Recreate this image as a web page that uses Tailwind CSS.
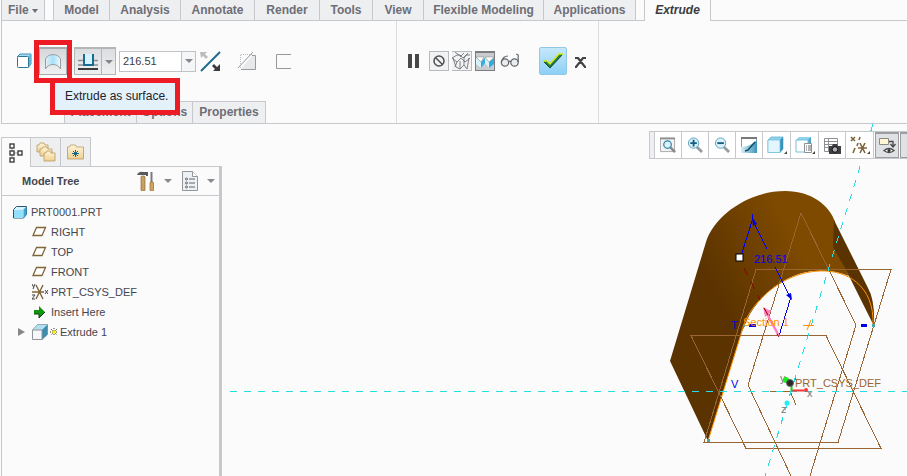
<!DOCTYPE html>
<html lang="en">
<head>
    <meta charset="UTF-8">
    <meta name="viewport" content="width=device-width, initial-scale=1.0">
    <title>PRT0001 - Extrude</title>
    <script src="https://cdn.jsdelivr.net/npm/@tailwindcss/browser@4"></script>
</head>
<body class="bg-[#fbfbfb] font-['Liberation_Sans',Arial,sans-serif] text-xs text-[#45454d]">
    <div class="flex flex-col min-h-screen overflow-hidden">

        <!-- Ribbon tabs -->
        <nav class="flex h-[21px] pl-px font-bold text-[#6e6e76] leading-5 text-center whitespace-nowrap">
            <a href="#" class="w-11 shrink-0 bg-[#edeff1] border-x border-b border-[#c6c8cc]">File <span class="inline-block align-middle border-x-3 border-t-4 border-x-transparent border-t-[#6e6e76]"></span></a>
            <span class="w-2 shrink-0 border-b border-[#c6c8cc]"></span>
            <a href="#" class="w-[57px] shrink-0 bg-[#edeff1] border-x border-b border-[#c6c8cc]">Model</a>
            <a href="#" class="w-[71px] shrink-0 bg-[#edeff1] border-r border-b border-[#c6c8cc]">Analysis</a>
            <a href="#" class="w-[74px] shrink-0 bg-[#edeff1] border-r border-b border-[#c6c8cc]">Annotate</a>
            <a href="#" class="w-[65px] shrink-0 bg-[#edeff1] border-r border-b border-[#c6c8cc]">Render</a>
            <a href="#" class="w-[53px] shrink-0 bg-[#edeff1] border-r border-b border-[#c6c8cc]">Tools</a>
            <a href="#" class="w-[51px] shrink-0 bg-[#edeff1] border-r border-b border-[#c6c8cc]">View</a>
            <a href="#" class="w-[120px] shrink-0 bg-[#edeff1] border-r border-b border-[#c6c8cc]">Flexible Modeling</a>
            <a href="#" class="w-[92px] shrink-0 bg-[#edeff1] border-r border-b border-[#c6c8cc]">Applications</a>
            <span class="w-2 shrink-0 border-b border-[#c6c8cc]"></span>
            <a href="#" class="w-[67px] shrink-0 border-x border-[#c6c8cc] italic text-[#3c3c42]">Extrude</a>
            <span class="grow border-b border-[#c6c8cc]"></span>
        </nav>

        <!-- Dashboard -->
        <section class="flex h-[103px] ml-px border-l border-b border-[#c6c8cc]">
            <div class="flex flex-col w-[395px] shrink-0 border-r border-[#dcdde0]">
                <div class="flex items-center h-20 pl-[14px]">
                    <button aria-label="Extrude as solid" class="mr-[7px]">
                        <svg class="size-4" viewBox="0 0 16 16"><path d="M1 4L4 1h11v10l-3 4" fill="#a5dcf2" stroke="#3a93b8"/><path d="M12 4l3-3v10l-3 4z" fill="#62b4d6"/><rect x="1.500" y="3.500" width="11" height="11" rx="1" fill="#fff" stroke="#2b7595"/></svg>
                    </button>
                    <div class="relative mr-[7px]">
                        <button aria-label="Extrude as surface" class="flex items-center justify-center w-7 h-7 border border-t-2 border-[#a8a8aa] bg-linear-to-b from-[#d6d7da] to-[#f0f1f2]">
                            <svg class="w-5 h-5" viewBox="0 0 20 20"><defs><linearGradient id="surf"><stop offset="0" stop-color="#e4eef3"/><stop offset=".5" stop-color="#a4e2fa"/><stop offset="1" stop-color="#f6f8f9"/></linearGradient></defs><path d="M2.500 17V7Q4 3 10 2.500Q16 3 17.500 7V17Q15 12.500 10 12.500T2.500 17z" fill="url(#surf)" stroke="#9a9da2"/></svg>
                        </button>
                        <span class="absolute -left-[5px] -top-[7px] w-[38px] h-[43px] border-5 border-[#ed1c24]"></span>
                        <div role="tooltip" class="absolute left-[11px] top-[31px] z-10 w-[130px] h-[37px] pl-[10px] border-5 border-[#ed1c24] bg-[#e2f1fa] leading-[27px] text-[#22222a] whitespace-nowrap">Extrude as surface.</div>
                    </div>
                    <div class="flex h-7 mr-[3px] border border-t-2 border-[#b4b5b7] bg-linear-to-b from-[#dcdde0] to-[#eff0f1]">
                        <button aria-label="Depth from sketch plane" class="flex items-center justify-center w-[27px] border-r border-[#b4b5b7]">
                            <svg class="w-5 h-[18px]" viewBox="0 0 20 18"><path d="M0 7.500h20M0 12h20" stroke="#8d8f92" stroke-width="1.500"/><path d="M0 16h20" stroke="#3c3c3e" stroke-width="2"/><path d="M6 1v11h9V1" fill="#d5f2fe"/><path d="M6 1v11h9V1" fill="none" stroke="#176c93" stroke-width="2"/></svg>
                        </button>
                        <button aria-label="Depth options" class="flex items-center justify-center w-[13px]"><span class="border-x-4 border-t-4 border-x-transparent border-t-[#85868a]"></span></button>
                    </div>
                    <div class="flex h-[21px] w-[77px] mr-1 border border-[#c0c2c6] bg-white">
                        <input type="text" value="216.51" aria-label="Depth" class="w-[61px] pl-[3px] text-[11px] text-[#3a3a40] outline-none">
                        <button aria-label="Recent depths" class="flex items-center justify-center w-[14px] border-l border-[#c0c2c6] bg-[#f5f6f7]"><span class="border-x-4 border-t-4 border-x-transparent border-t-[#85868a]"></span></button>
                    </div>
                    <button aria-label="Flip direction" class="mr-4">
                        <svg class="size-[21px]" viewBox="0 0 21 21"><path d="M1 20L20 1" stroke="#1f6a8e" stroke-width="2"/><path d="M0 1h7L5 3l3 3-2 2-3-3-2 2z" fill="#bcbdbe"/><path d="M20 20h-7l2-2-3-3 2-2 3 3 3-3z" fill="#3c3c3e"/></svg>
                    </button>
                    <button aria-label="Remove material" class="mr-[18px]">
                        <svg class="size-5" viewBox="0 0 20 20"><path d="M3.500 17V3.500H15" fill="none" stroke="#bbbcbe" stroke-dasharray="1 1"/><path d="M4 18L15 5h3v13z" fill="#e8e9ea"/><path d="M4 18.500h14.500V4.500H15M1 17L16 1" fill="none" stroke="#999a9c"/></svg>
                    </button>
                    <button aria-label="Thicken sketch">
                        <svg class="w-4 h-[17px]" viewBox="0 0 16 17"><path d="M16 1.500H1.500v14H16" fill="none" stroke="#97989b"/></svg>
                    </button>
                </div>
                <div class="flex h-[22px] pl-[62px] font-bold text-[#6e6e76] text-center leading-[21px]">
                    <button class="w-[73px] border border-b-0 border-[#c6c8cc] bg-[#edeff1]">Placement</button>
                    <button class="w-14 border border-b-0 border-l-0 border-[#c6c8cc] bg-[#edeff1]">Options</button>
                    <button class="w-[73px] border border-b-0 border-l-0 border-[#c6c8cc] bg-[#edeff1]">Properties</button>
                </div>
            </div>
            <div class="flex items-center w-[202px] h-full shrink-0 pl-[11px] pb-[22px] border-r border-[#dcdde0]">
                <button aria-label="Pause" class="flex gap-[3px] mr-[10px]"><span class="w-1 h-[14px] bg-[#48484b]"></span><span class="w-1 h-[14px] bg-[#48484b]"></span></button>
                <button aria-label="No preview" class="flex items-center justify-center size-5 mr-[3px] border border-[#b8babd] bg-[#f1f2f3]">
                    <svg class="size-3" viewBox="0 0 12 12"><circle cx="6" cy="6" r="5" fill="none" stroke="#505054" stroke-width="1.500"/><path d="M2.500 2.500l7 7" stroke="#505054" stroke-width="1.500"/></svg>
                </button>
                <button aria-label="Unattached preview" class="size-5 mr-[3px] border border-l-0 border-[#b8babd] bg-[#f1f2f3]">
                    <svg class="size-[18px]" viewBox="0 0 18 18"><path d="M0 6l5-3h3l3 3 3-3h4M0 6l5 4 4-4 4 4 5-4M1 6l3 9 4 2 4-4 3 4 2-11M8 9v8M12 6v7M5 10l-2 5M3 0l5 4M12 1L8 5M16 1l-4 5" fill="none" stroke="#66666a" stroke-width=".8"/></svg>
                </button>
                <button aria-label="Attached preview" class="size-5 mr-[5px] border border-t-2 border-[#7c7d80] bg-[#c9cbce]">
                    <svg class="w-[18px] h-[17px]" viewBox="0 0 18 17"><path d="M0 5l5 4v6l-5-4zM9 5l4 4v6l-4-5z" fill="#d5f3fd"/><path d="M5 9l4-4v5l-4 5zM13 9l5-4v6l-5 4z" fill="#35acdc"/><path d="M0 4h8L5 9zM9 4h9l-5 5z" fill="#fff" stroke="#808488" stroke-width=".5"/></svg>
                </button>
                <button aria-label="Verify" class="mr-[19px]">
                    <svg class="w-5 h-4" viewBox="0 0 20 16"><g fill="#e9edf0" stroke="#606468" stroke-width="1.200"><circle cx="5" cy="9.500" r="3.700"/><circle cx="14.500" cy="9.500" r="3.700"/><path d="M1.300 9Q3 3 8 3M8.700 9q1-2 2.100 0M18.200 9V2l-2-1" fill="none"/></g></svg>
                </button>
                <button aria-label="Accept" class="flex items-center justify-center size-7 mr-[7px] rounded-xs border border-[#92c8e6] bg-linear-to-b from-[#c5e7fa] to-[#8dd0f7]">
                    <svg class="w-5 h-4" viewBox="0 0 20 16"><path d="M0 8h4l3 3L16 1h4L7 15z" fill="#1e7d47"/><path d="M0 8h4l3 3L16 1h4" fill="none" stroke="#d5e810" stroke-width="1.500"/><path d="M1 9l6 6L19 2" fill="none" stroke="#1c4d2b"/></svg>
                </button>
                <button aria-label="Cancel" class="pt-[3px]">
                    <svg class="w-[13px] h-[11px]" viewBox="0 0 13 11"><path d="M1 1h3l7 9h1M12 1H9l-7 9H1" fill="none" stroke="#444447" stroke-width="2.200"/></svg>
                </button>
            </div>
        </section>

        <main class="flex grow">
            <!-- Model tree -->
            <aside class="flex flex-col w-[222px] shrink-0 pl-px pt-[13px]">
                <div class="flex h-[30px]">
                    <button aria-label="Model Tree" class="flex items-center justify-center w-[30px] border border-b-0 border-[#c6c8cc]">
                        <svg class="w-[14px] h-5" viewBox="0 0 14 20"><path d="M3 5v11M5 10h5" stroke="#9a9a9c"/><g fill="#fff" stroke="#404044" stroke-width="1.400"><rect x="1" y="1" width="4" height="4"/><rect x="1" y="8" width="4" height="4"/><rect x="1" y="15" width="4" height="4"/><rect x="9" y="8" width="4" height="4"/></g></svg>
                    </button>
                    <button aria-label="Folder Browser" class="flex items-center justify-center w-[30px] border-t border-r border-b border-[#c6c8cc] bg-[#edeff1]">
                        <svg class="size-5" viewBox="0 0 20 20"><defs><linearGradient id="folder" x2="0" y2="1"><stop offset="0" stop-color="#fff6dc"/><stop offset="1" stop-color="#eecf91"/></linearGradient></defs><g fill="url(#folder)" stroke="#b99a62" stroke-width=".8"><path d="M1 10V3h2l1-2h4l1 2h3v7z"/><path d="M4 14V7h2l1-2h4l1 2h4v7z"/><path d="M8 19v-8h2l1-2h3l1 2h4v8z"/></g></svg>
                    </button>
                    <button aria-label="Favorites" class="flex items-center justify-center w-[30px] border-t border-r border-b border-[#c6c8cc] bg-[#edeff1]">
                        <svg class="w-[17px] h-4" viewBox="0 0 17 16"><path d="M.5 15V3h2l1-2h5l1 2h7v12z" fill="url(#folder)" stroke="#b99a62" stroke-width=".8"/><path d="M8.500 6v7M5 9.500h7M6 7l5 5M11 7l-5 5" stroke="#1d6788"/></svg>
                    </button>
                    <span class="grow border-b border-[#c6c8cc]"></span>
                </div>
                <div class="flex flex-col grow border-l border-r-3 border-[#c6c8cc]">
                    <div class="flex items-center h-[29px] pl-5 pr-1 border-b border-[#c6c8cc]">
                        <h2 class="grow text-[11px] font-bold">Model Tree</h2>
                        <button aria-label="Settings" class="flex items-center gap-[10px] mr-[10px]">
                            <svg class="w-[17px] h-5" viewBox="0 0 17 20"><path d="M0 4Q2 0 6 1h5v4H9V4H3z" fill="#55595e"/><rect x="4" y="5" width="4" height="15" rx="1" fill="#c9a060" stroke="#8d6a36" stroke-width=".7"/><path d="M14.500 1v10" stroke="#777b80" stroke-width="2"/><rect x="13" y="11" width="3.500" height="9" rx="1" fill="#d3a55c" stroke="#8d6a36" stroke-width=".7"/></svg>
                            <span class="border-x-4 border-t-4 border-x-transparent border-t-[#88898c]"></span>
                        </button>
                        <button aria-label="Show" class="flex items-center gap-[9px]">
                            <svg class="w-4 h-5" viewBox="0 0 16 20"><path d="M.5.500h10l5 5v14H.5z" fill="#edf1f3" stroke="#92969a"/><path d="M10.500.500v5h5" fill="#fff" stroke="#92969a"/><g fill="none" stroke="#606468"><circle cx="4.500" cy="8" r="1"/><circle cx="4.500" cy="12" r="1"/><circle cx="4.500" cy="16" r="1"/><path d="M7 8h6M7 12h6M7 16h6"/></g></svg>
                            <span class="border-x-4 border-t-4 border-x-transparent border-t-[#88898c]"></span>
                        </button>
                    </div>
                    <ul class="pt-[6px] text-[11px] leading-5 whitespace-nowrap">
                        <li class="flex items-center h-5 pl-[11px] gap-1">
                            <svg class="size-[14px]" viewBox="0 0 14 14"><path d="M.5 4.500l3-3h10v8l-3 3.500H.5z" fill="#d9f3fe" stroke="#24586e"/><path d="M10.500 4.500l3-3v8l-3 3.500z" fill="#3fa5cd"/><path d="M1 5h9v8H1z" fill="#94dffb"/></svg>
                            PRT0001.PRT
                        </li>
                        <li class="flex items-center h-5 pl-[30px] gap-1">
                            <svg class="w-[15px] h-3" viewBox="0 0 15 12"><path d="M4.500 1.500h9l-3.500 8H1z" fill="#fff" stroke="#80653b" stroke-width="1.300"/></svg>
                            RIGHT
                        </li>
                        <li class="flex items-center h-5 pl-[30px] gap-1">
                            <svg class="w-[15px] h-3" viewBox="0 0 15 12"><path d="M4.500 1.500h9l-3.500 8H1z" fill="#fff" stroke="#80653b" stroke-width="1.300"/></svg>
                            TOP
                        </li>
                        <li class="flex items-center h-5 pl-[30px] gap-1">
                            <svg class="w-[15px] h-3" viewBox="0 0 15 12"><path d="M4.500 1.500h9l-3.500 8H1z" fill="#fff" stroke="#80653b" stroke-width="1.300"/></svg>
                            FRONT
                        </li>
                        <li class="flex items-center h-5 pl-[30px] gap-[3px]">
                            <svg class="size-4" viewBox="0 0 16 16"><path d="M0 8h12M4 1l2 4 5 10M11 1L6 11l-2 4" fill="none" stroke="#80653b" stroke-width="1.400"/><path d="M0 0l1.500 3M3 0L1 5M0 11h3l-3 4h3M13 6l3 4M16 6l-3 4" fill="none" stroke="#44444a"/></svg>
                            PRT_CSYS_DEF
                        </li>
                        <li class="flex items-center h-5 pl-8 gap-[6px]">
                            <svg class="w-[11px] h-3" viewBox="0 0 11 12"><path d="M0 4h5V0l6 6-6 6V8H0z" fill="#10950f"/><path d="M0 8h5v4l6-6" fill="none" stroke="#173c12"/></svg>
                            Insert Here
                        </li>
                        <li class="flex items-center h-5 pl-4">
                            <button aria-label="Expand" class="mr-[7px] border-y-4 border-l-7 border-y-transparent border-l-[#87878a]"></button>
                            <svg class="size-4 mr-[2px]" viewBox="0 0 16 16"><path d="M.5 6l5-5.500h10v10L10 15.500z" fill="#b2dff2" stroke="#7c9aa8" stroke-width=".8"/><path d="M10 6l5.500-5.500v10L10 15.500z" fill="#3b8db0"/><path d="M.5 6H10v9.500H.5z" fill="#f6f7f8" stroke="#90959a"/></svg>
                            <svg class="size-2 mr-[2px]" viewBox="0 0 8 8"><path d="M4 0v8M0 4h8M1 1l6 6M7 1L1 7" stroke="#33332c" stroke-dasharray="1 1"/><rect x="2.500" y="2.500" width="3" height="3" fill="#f8f000"/></svg>
                            Extrude 1
                        </li>
                    </ul>
                </div>
            </aside>

            <!-- Graphics area -->
            <section class="relative grow overflow-hidden">
                <svg class="absolute inset-0 size-full" viewBox="222 124 685 352" preserveAspectRatio="xMidYMid slice">
                    <defs>
                        <linearGradient id="shell" gradientUnits="userSpaceOnUse" x1="710" y1="285" x2="795" y2="240"><stop offset="0" stop-color="#5b3300"/><stop offset="1" stop-color="#7e4a00"/></linearGradient>
                    </defs>
                    <path d="M670 361L706 242C714 216 748 191 785 191C812 191 830 206 835 222L834 247L849 276Q835 270 815 271C784 273 757 298 747 320L741 334L708 441z" fill="url(#shell)"/>
                    <path d="M834 220L868 288Q875 300 874 326L849 276L833 247z" fill="#5b3300"/>
                    <path d="M708 441L741 334C747 304 782 272 820 271C845 270 875 284 873 326" fill="none" stroke="#ff9200"/>
                    <!-- datum planes -->
                    <g fill="none" stroke="#996633" shape-rendering="crispEdges">
                        <path d="M756 269.500H891L838 442.500H704z"/>
                        <path d="M691 335.500H826L881 448.500H746z"/>
                        <path d="M791 476L748 385L801 213L856 325L810 476"/>
                        <path d="M770 391.500H791M790 391L796 405M795 375V380"/>
                    </g>
                    <g fill="none" stroke="#25dde2" shape-rendering="crispEdges">
                        <path d="M230 391.500H907" stroke-dasharray="7 7"/>
                        <path d="M873 124L765 476" stroke-dasharray="7.300 7.300"/>
                    </g>
                    <!-- depth dimension -->
                    <path d="M752.500 214V220M753 218L741 256M752 219L767 249M775 267L791 299M791 297L779 336" fill="none" stroke="#0000e6" shape-rendering="crispEdges"/>
                    <path d="M752 217l5 7-4 2zM792 300l-6-5 5-2z" fill="#0000e6"/>
                    <path d="M744 268L760 300" stroke="#8b0000" stroke-dasharray="8 7"/>
                    <path d="M766 312L779 336" stroke="#ff80c0" stroke-width="2.500"/>
                    <path d="M763 307l8 4-2 3-4 3z" fill="#ff80c0"/>
                    <path d="M764 308l4 7M777 334l2 3" stroke="#8b0000"/>
                    <rect x="736" y="254" width="7" height="7" fill="#fff" stroke="#000"/>
                    <path d="M749 324h7v3h-7zM861 324h6v3h-6z" fill="#0000e6"/>
                    <path d="M803 325.500h11M807 330l4-10" stroke="#ff9200"/>
                    <path d="M872 324h3v3h-3zM707 439h3v3h-3zM743 324h2v3h-2z" fill="#45a6ad"/>
                    <g font-size="11">
                        <text x="754" y="263" fill="#0000e6">216.51</text>
                        <text x="743" y="326" fill="#ff9200">Section 1</text>
                        <text x="731" y="329" fill="#0000e6">T</text>
                        <text x="731" y="388" fill="#0000e6">V</text>
                        <text x="795" y="387" fill="#996633">PRT_CSYS_DEF</text>
                        <text x="780" y="382" fill="#777777">y</text>
                        <text x="807" y="397" fill="#777777">x</text>
                        <text x="781" y="413" fill="#777777">z</text>
                    </g>
                    <path d="M791 390.500H804" stroke="#f33" stroke-width="2"/>
                    <path d="M791.500 386v5" stroke="#2c2" stroke-width="2"/>
                    <circle cx="806" cy="390" r="2" fill="#f33"/>
                    <circle cx="786" cy="380" r="3" fill="#19ef19"/>
                    <circle cx="790" cy="383" r="3.500" fill="#282828" stroke="#666"/>
                    <circle cx="787" cy="403" r="2.500" fill="#20f0f4"/>
                </svg>

                <!-- In-graphics toolbar -->
                <div class="absolute right-0 top-[7px] flex w-[258px] h-7 overflow-hidden border border-r-0 border-[#c6c8cc] bg-white">
                    <span class="w-[5px] shrink-0 border-r border-[#c6c8cc] bg-[#edeff1]"></span>
                    <button aria-label="Refit" class="flex items-center justify-center w-[27px] shrink-0 border-r border-[#c6c8cc]">
                        <svg class="size-4" viewBox="0 0 17 17"><path d="M.5 1.500h15v14H.5z" fill="#f2f3f4" stroke="#a6a8aa"/><path d="M0 1.500h16" stroke="#8c8e90" stroke-width="2"/><path d="M11 11l5 5" stroke="#85878a" stroke-width="2.500"/><circle cx="8" cy="8" r="4" fill="#dcf3fb" stroke="#2b82a5" stroke-width="1.300"/></svg>
                    </button>
                    <button aria-label="Zoom In" class="flex items-center justify-center w-[27px] shrink-0 border-r border-[#c6c8cc]">
                        <svg class="size-4" viewBox="0 0 17 17"><path d="M10 10l6 6" stroke="#999b9e" stroke-width="3"/><circle cx="7" cy="6.500" r="5.500" fill="#d9f1fb" stroke="#5ca0bc"/><path d="M3.500 6.500h7M7 3v7" stroke="#125f82" stroke-width="2"/></svg>
                    </button>
                    <button aria-label="Zoom Out" class="flex items-center justify-center w-[27px] shrink-0 border-r border-[#c6c8cc]">
                        <svg class="size-4" viewBox="0 0 17 17"><path d="M10 10l6 6" stroke="#999b9e" stroke-width="3"/><circle cx="7" cy="6.500" r="5.500" fill="#d9f1fb" stroke="#5ca0bc"/><path d="M3.500 6.500h7" stroke="#125f82" stroke-width="2"/></svg>
                    </button>
                    <button aria-label="Repaint" class="flex items-center justify-center w-[27px] shrink-0 border-r border-[#c6c8cc]">
                        <svg class="size-4" viewBox="0 0 16 16"><defs><linearGradient id="paint"><stop offset="0" stop-color="#d9eff8"/><stop offset="1" stop-color="#3c94b9"/></linearGradient></defs><path d="M.5.500h15v15H.5z" fill="#fff" stroke="#7fa0ae"/><path d="M0 16V10Q9 10 16 3v13z" fill="url(#paint)"/><path d="M0 1h16" stroke="#77797c" stroke-width="2"/><path d="M4 14l3-1 7-8" fill="none" stroke="#174e67" stroke-width="1.500"/></svg>
                    </button>
                    <button aria-label="Display Style" class="flex items-center justify-center w-7 shrink-0 border-r border-[#c6c8cc]">
                        <svg class="w-5 h-[18px]" viewBox="0 0 20 18"><path d="M1 4l3-3h12v12l-3 3.500H1z" fill="#8ed2ec" stroke="#5ab0d2" stroke-width=".7"/><path d="M13 4l3-3v12l-3 3.500z" fill="#3793bb"/><path d="M1 4h12v12.500H1z" fill="#e3f6fe" stroke="#6fbcda" stroke-width=".7"/><path d="M20 15v3h-3z" fill="#444"/></svg>
                    </button>
                    <button aria-label="Saved Orientations" class="flex items-center justify-center w-7 shrink-0 border-r border-[#c6c8cc]">
                        <svg class="w-5 h-[18px]" viewBox="0 0 20 18"><path d="M1 4l3-3h12v12l-3 3H1z" fill="#8ed2ec"/><path d="M13 4l3-3v12l-3 3z" fill="#4ca4c8"/><path d="M1 4h12v12H1z" fill="#fff" stroke="#79bfda"/><path d="M9.500 7.500h7v9h-7z" fill="#fff" stroke="#8c8e90"/><path d="M11 10h1M13 10h3M11 12h1M13 12h3M11 14h1M13 14h3" stroke="#666"/><path d="M20 15v3h-3z" fill="#444"/></svg>
                    </button>
                    <button aria-label="View Manager" class="flex items-center justify-center w-[27px] shrink-0 border-r border-[#c6c8cc]">
                        <svg class="size-[17px]" viewBox="0 0 17 17"><path d="M.5 1.500h13v13H.5zM.5 4.500h13M.5 7.500h13M.5 10.500h13M4.500 1.500v13" fill="#fff" stroke="#8e9093"/><path d="M5 9h3l1-2h4l1 2h3v8H5z" fill="#3e3e42"/><circle cx="11" cy="12.500" r="2.800" fill="#aeb1b5" stroke="#151518"/></svg>
                    </button>
                    <button aria-label="Datum Display Filters" class="flex items-center justify-center w-7 shrink-0 border-r border-[#c6c8cc]">
                        <svg class="w-5 h-[18px]" viewBox="0 0 20 18"><path d="M1 1l4 4M5 1L1 5M10 1L9 4M8 7l-1 3M5 12l-2 5M8 12h9M10 7l5 10M15 7l-5 10" stroke="#80653b" stroke-width="1.600"/><path d="M20 15v3h-3z" fill="#444"/></svg>
                    </button>
                    <button aria-label="Annotation Display" class="flex items-center justify-center w-6 mx-px shrink-0 border border-t-2 border-[#9c9da0] bg-[#dfe1e4]">
                        <svg class="size-[17px]" viewBox="0 0 17 17"><path d="M.5 1.500h9v6h-9z" fill="#fff5d7" stroke="#8c8a80"/><path d="M10 4.500h4v5M11.500 7l2.500 3 2.500-3" fill="none" stroke="#48484c" stroke-width="1.300"/><path d="M5 13.500Q10 9.500 15 13.500Q10 17.500 5 13.500z" fill="#fff" stroke="#48484c" stroke-width="1.300"/><circle cx="10" cy="13.500" r="1.500" fill="#333"/></svg>
                    </button>
                    <button aria-label="Spin Center" class="w-6 shrink-0 border border-t-2 border-[#9c9da0] bg-[#dfe1e4]"></button>
                </div>
            </section>
        </main>
    </div>
</body>
</html>
